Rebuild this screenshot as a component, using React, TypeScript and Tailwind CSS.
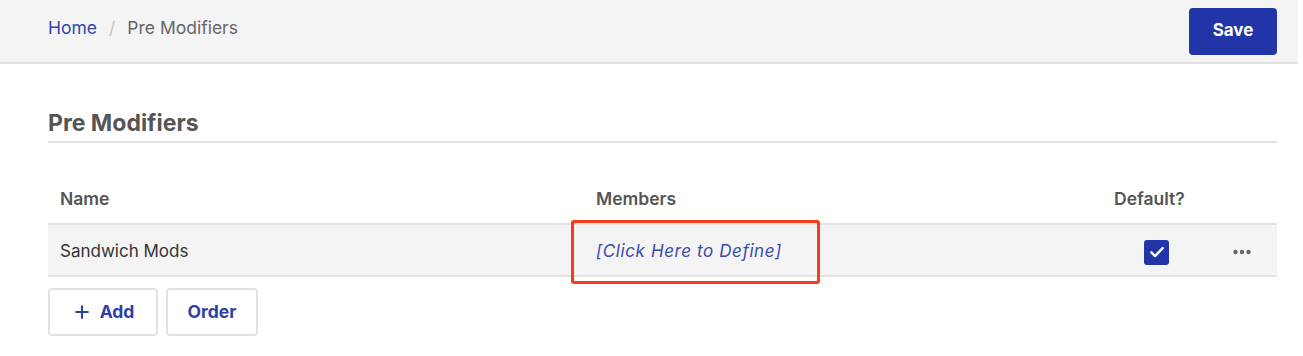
import { Plus } from "lucide-react"

function Header() {
  return (
    <div className="flex h-[64px] items-center justify-between border-b-2 border-[#e2e2e2] bg-[#f4f4f4] pl-[48px] pr-[21px]">
      <nav className="flex items-center gap-[12px] pb-[6px] text-[17.5px]">
        <a className="text-[#3346a6]">Home</a>
        <span className="text-[#c4c4c4]">/</span>
        <span className="text-[#666]">Pre Modifiers</span>
      </nav>
      <button className="h-[47px] w-[88px] rounded-[4px] bg-[#2135a8] text-[17px] font-bold text-white">
        Save
      </button>
    </div>
  )
}

function PreModifiersTable() {
  return (
    <div>
      <div className="grid grid-cols-[536px_518px_1fr] items-center px-[12px] pb-[12px] text-[17.5px] leading-[25px] font-semibold text-[#555]">
        <span>Name</span>
        <span>Members</span>
        <span>Default?</span>
      </div>
      <div className="grid h-[54px] grid-cols-[536px_518px_1fr] border-y-2 border-[#e3e3e3] bg-[#f4f4f4] px-[12px] text-[17px] text-[#333]">
        <span className="flex items-center pt-[4px]">Sandwich Mods</span>
        <div className="relative flex items-center pt-[4px]">
          <a className="italic tracking-[0.6px] text-[#3a49ad]">[Click Here to Define]</a>
          <div className="absolute left-[-25px] top-[-5px] h-[64px] w-[249px] rounded-[3px] border-[3px] border-[#f53c1c]" />
        </div>
        <div className="flex items-center pt-[4px]">
          <span className="ml-[30px] flex h-[25px] w-[25px] items-center justify-center rounded-[3px] bg-[#2135a8]">
            <svg width="18" height="18" viewBox="0 0 16 16" fill="none">
              <path d="M3 8.3l3.3 3.3L13 4.6" stroke="white" strokeWidth="2.2" strokeLinecap="round" strokeLinejoin="round" />
            </svg>
          </span>
          <svg className="ml-[64px]" width="18" height="6" viewBox="0 0 18 6">
            <circle cx="2.5" cy="3" r="2.2" fill="#666" />
            <circle cx="9" cy="3" r="2.2" fill="#666" />
            <circle cx="15.5" cy="3" r="2.2" fill="#666" />
          </svg>
        </div>
      </div>
    </div>
  )
}

export default function App() {
  return (
    <div className="w-[1298px] bg-white font-['Inter',sans-serif]">
      <Header />
      <div className="pl-[48px] pr-[21px]">
        <h1 className="mt-[44px] border-b-2 border-[#e3e3e3] pb-[3px] text-[23px] leading-[30px] font-bold text-[#555]">
          Pre Modifiers
        </h1>
        <div className="mt-[43px]">
          <PreModifiersTable />
        </div>
        <div className="mt-[11px] flex gap-[8px]">
          <button className="flex h-[48px] w-[110px] items-center justify-center gap-[8px] rounded-[4px] border-2 border-[#e2e2e2] bg-white text-[17.5px] font-bold text-[#2e40a6]">
            <Plus size={20} strokeWidth={2.5} />
            Add
          </button>
          <button className="h-[48px] w-[92px] rounded-[4px] border-2 border-[#e2e2e2] bg-white text-[17.5px] font-bold text-[#2e40a6]">
            Order
          </button>
        </div>
      </div>
    </div>
  )
}
